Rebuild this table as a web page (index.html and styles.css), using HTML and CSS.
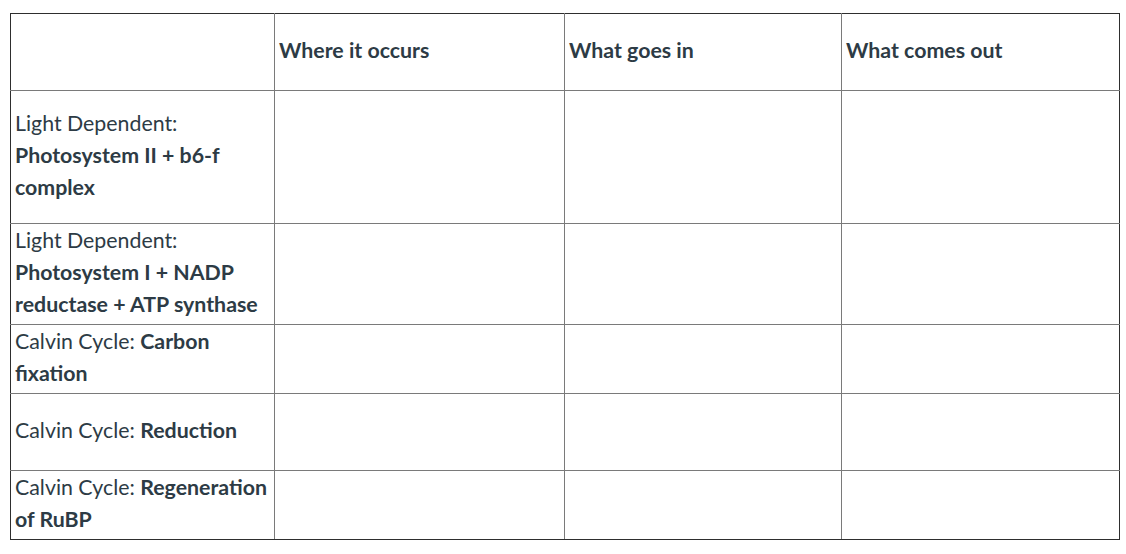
FILE: index.html
```html
<!DOCTYPE html>
<html>
<head>
<meta charset="utf-8">
<link rel="stylesheet" href="styles.css">
</head>
<body>
<table class="grid">
  <colgroup>
    <col class="c1"><col class="c2"><col class="c3"><col class="c4">
  </colgroup>
  <tr class="head">
    <td></td>
    <td><strong>Where it occurs</strong></td>
    <td><strong>What goes in</strong></td>
    <td><strong>What comes out</strong></td>
  </tr>
  <tr class="r1">
    <td>Light Dependent:<br><strong>Photosystem II + b6-f complex</strong></td>
    <td></td><td></td><td></td>
  </tr>
  <tr>
    <td>Light Dependent:<br><strong>Photosystem I + NADP reductase + ATP synthase</strong></td>
    <td></td><td></td><td></td>
  </tr>
  <tr>
    <td>Calvin Cycle: <strong>Carbon fixation</strong></td>
    <td></td><td></td><td></td>
  </tr>
  <tr class="r4">
    <td>Calvin Cycle: <strong>Reduction</strong></td>
    <td></td><td></td><td></td>
  </tr>
  <tr>
    <td>Calvin Cycle: <strong>Regeneration of RuBP</strong></td>
    <td></td><td></td><td></td>
  </tr>
</table>
</body>
</html>
```
FILE: styles.css
```css
html, body {
  margin: 0;
  padding: 0;
  background: #ffffff;
}
body {
  font-family: Lato, "Liberation Sans", sans-serif;
  font-size: 21.33px;
  line-height: 32px;
  color: #2d3b45;
}
.grid {
  border-collapse: collapse;
  table-layout: fixed;
  width: 1109px;
  margin: 13px 0 0 10px;
}
.c1 { width: 264px; }
.c2 { width: 290px; }
.c3 { width: 277px; }
.c4 { width: 278px; }
.grid td {
  border: 1px solid #7a7a7a;
  padding: 0 4px 4px 4px;
  vertical-align: middle;
}
.grid tr:first-child td { border-top-color: #2e2e2e; }
.grid tr:last-child td { border-bottom-color: #2e2e2e; }
.grid td:first-child { border-left-color: #2e2e2e; }
.grid td:last-child { border-right-color: #2e2e2e; }
.grid strong { font-weight: 700; }
.head td { height: 72px; }
.r1 td { height: 128px; }
.r4 td { height: 72px; }
```
